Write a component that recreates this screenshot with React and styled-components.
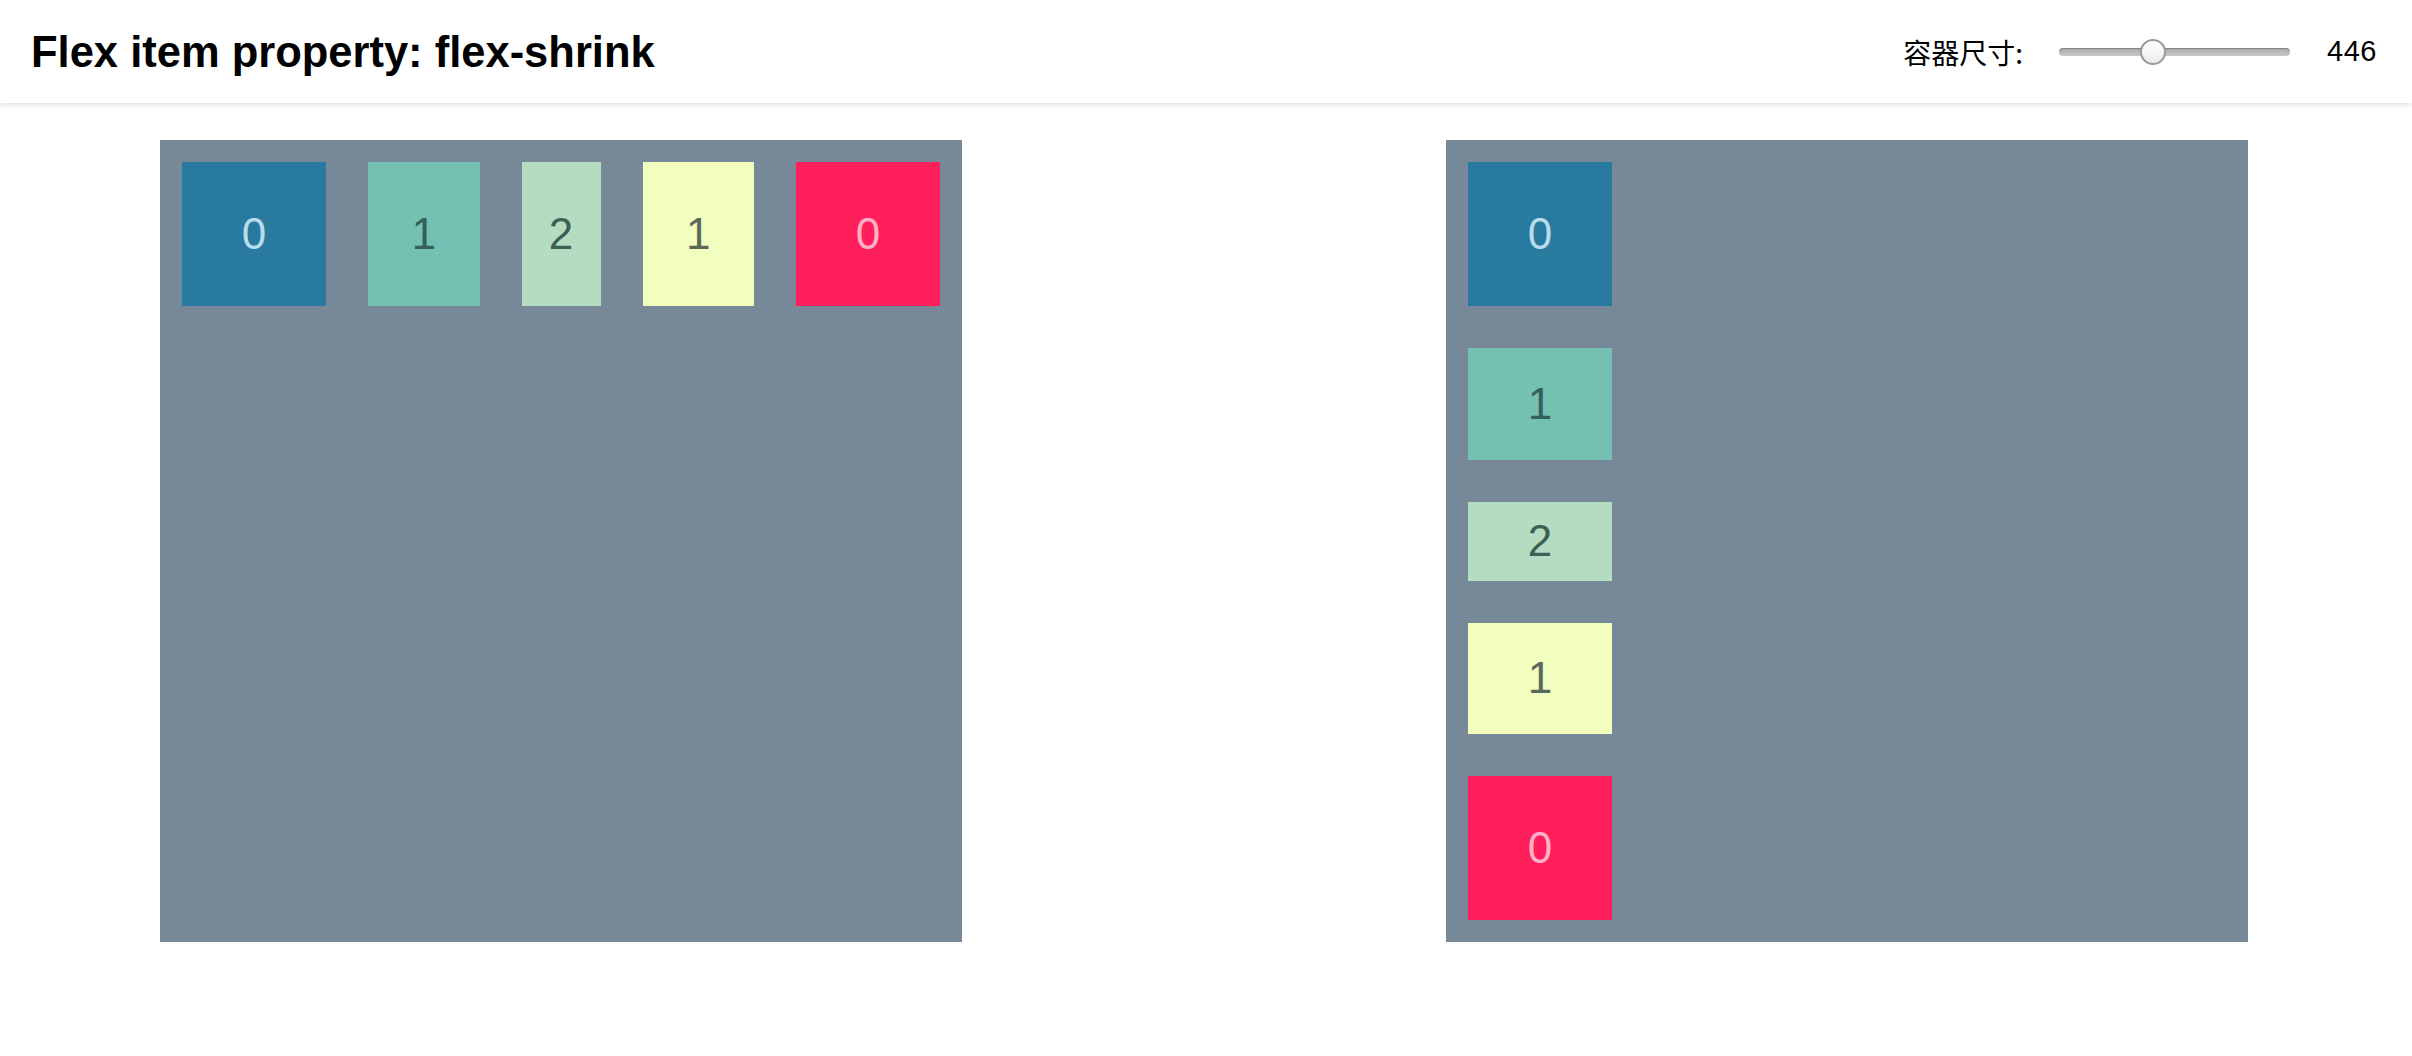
import React, { useState } from "react";
import styled, { createGlobalStyle } from "styled-components";

const GlobalStyle = createGlobalStyle`
  html, body {
    margin: 0;
    padding: 0;
    background: #ffffff;
    font-family: "Liberation Sans", Arial, "Noto Sans CJK SC", sans-serif;
  }
`;

const Page = styled.div`
  width: 2412px;
  min-height: 1056px;
  background: #fff;
`;

const Header = styled.header`
  height: 103px;
  box-sizing: border-box;
  padding: 0 35px 0 31px;
  display: flex;
  align-items: center;
  justify-content: space-between;
  background: #fff;
  box-shadow: 0 2px 5px rgba(0, 0, 0, 0.12);
  position: relative;
  z-index: 1;
`;

const Title = styled.h1`
  margin: 0;
  font-family: "Liberation Sans", Arial, sans-serif;
  font-weight: 700;
  font-size: 43.5px;
  color: #000;
  line-height: 1;
  padding-top: 2px;
`;

const Controls = styled.div`
  display: flex;
  align-items: center;
`;

const Label = styled.span`
  font-family: "Noto Sans CJK SC", "Liberation Sans", sans-serif;
  font-size: 28px;
  color: #000;
  margin-right: 36px;
`;

const Range = styled.input`
  -webkit-appearance: none;
  appearance: none;
  width: 231px;
  height: 28px;
  margin: 0 37px 0 0;
  background: transparent;
  cursor: pointer;

  &::-webkit-slider-runnable-track {
    height: 8px;
    border-radius: 4px;
    background: linear-gradient(#a9a9a9, #c8c8c8);
    box-shadow: inset 0 1px 1px rgba(0, 0, 0, 0.25);
  }

  &::-webkit-slider-thumb {
    -webkit-appearance: none;
    appearance: none;
    width: 26px;
    height: 26px;
    margin-top: -9px;
    border-radius: 50%;
    background: linear-gradient(#ffffff, #ececec);
    border: 2px solid #9a9a9a;
    box-sizing: border-box;
  }
`;

const Value = styled.span`
  font-family: "Liberation Sans", Arial, sans-serif;
  font-size: 29px;
  letter-spacing: 0.5px;
  color: #000;
`;

const Main = styled.main`
  display: flex;
  justify-content: space-between;
  padding: 37px 164px 0 160px;
`;

const Container = styled.div`
  display: flex;
  flex-direction: ${(p) => p.$direction};
  width: 802px;
  height: 802px;
  box-sizing: border-box;
  padding: 1px;
  background: #778899;
`;

const Item = styled.div`
  flex: 0 ${(p) => p.$shrink} auto;
  width: 144px;
  height: 144px;
  margin: 21px;
  display: flex;
  align-items: center;
  justify-content: center;
  background: ${(p) => p.$bg};
  color: ${(p) => p.$fg};
  font-family: "Liberation Sans", Arial, sans-serif;
  font-size: 44px;
  font-weight: 400;
  min-width: 0;
  min-height: 0;
  overflow: hidden;
`;

const items = [
  { shrink: 0, bg: "#287a9f", fg: "#b8dcec" },
  { shrink: 1, bg: "#74c1b3", fg: "#36605b" },
  { shrink: 2, bg: "#b3dcc1", fg: "#3d5f55" },
  { shrink: 1, bg: "#f2fdc0", fg: "#586859" },
  { shrink: 0, bg: "#ff1f5a", fg: "#ffb1c9" },
];

export default function App() {
  const [size, setSize] = useState(446);
  return (
    <Page>
      <GlobalStyle />
      <Header>
        <Title>Flex item property: flex-shrink</Title>
        <Controls>
          <Label>容器尺寸:</Label>
          <Range
            type="range"
            min={200}
            max={825}
            value={size}
            onChange={(e) => setSize(Number(e.target.value))}
          />
          <Value>{size}</Value>
        </Controls>
      </Header>
      <Main>
        {["row", "column"].map((dir) => (
          <Container key={dir} $direction={dir}>
            {items.map((it, i) => (
              <Item key={i} $shrink={it.shrink} $bg={it.bg} $fg={it.fg}>
                {it.shrink}
              </Item>
            ))}
          </Container>
        ))}
      </Main>
    </Page>
  );
}
